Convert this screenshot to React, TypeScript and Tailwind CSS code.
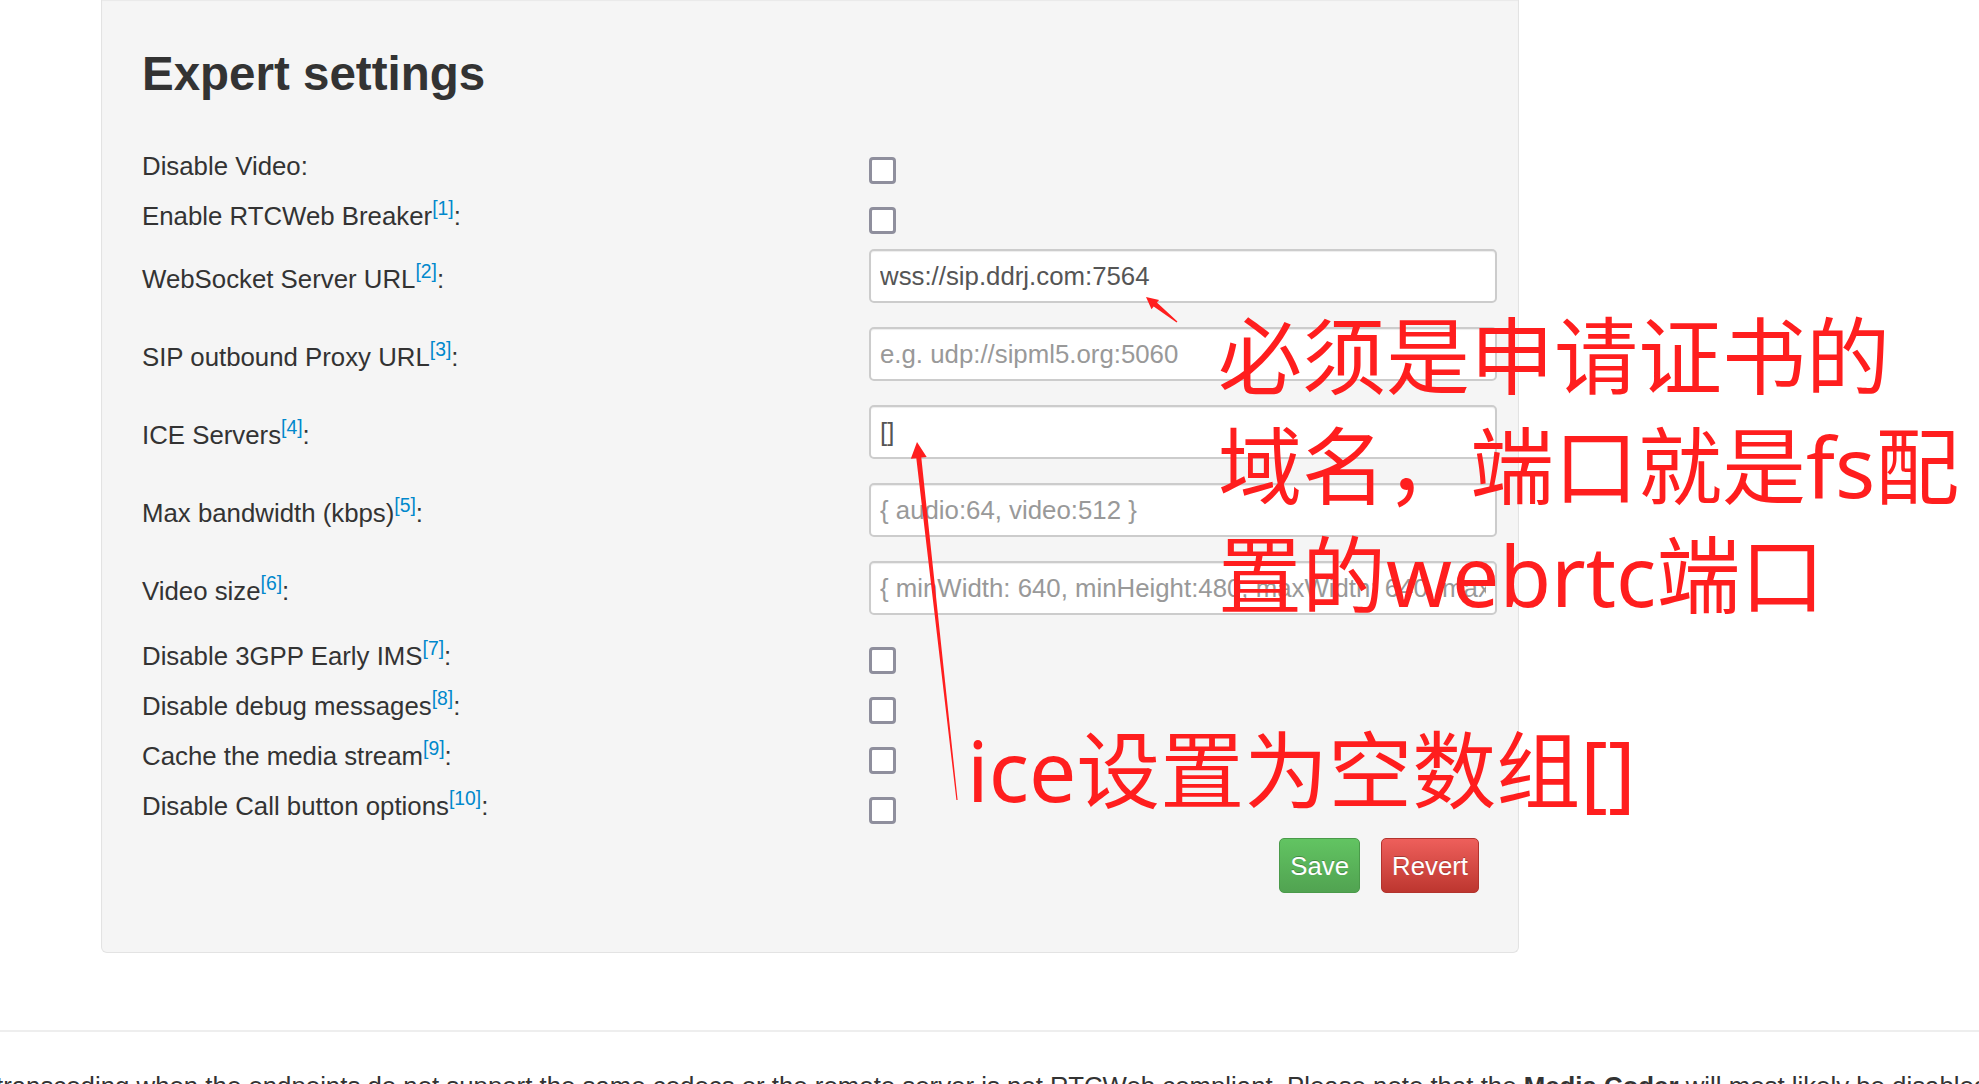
import React from 'react';

type Row =
  | { kind: 'check'; label: string; note?: string; h: string }
  | { kind: 'text'; label: string; note?: string; h: string; value?: string; placeholder?: string };

const rows: Row[] = [
  { kind: 'check', label: 'Disable Video', h: 'h-[50px]' },
  { kind: 'check', label: 'Enable RTCWeb Breaker', note: '1', h: 'h-[47px]' },
  { kind: 'text', label: 'WebSocket Server URL', note: '2', h: 'h-[78px]', value: 'wss://sip.ddrj.com:7564' },
  { kind: 'text', label: 'SIP outbound Proxy URL', note: '3', h: 'h-[78px]', placeholder: 'e.g. udp://sipml5.org:5060' },
  { kind: 'text', label: 'ICE Servers', note: '4', h: 'h-[78px]', value: '[]' },
  { kind: 'text', label: 'Max bandwidth (kbps)', note: '5', h: 'h-[78px]', placeholder: '{ audio:64, video:512 }' },
  {
    kind: 'text',
    label: 'Video size',
    note: '6',
    h: 'h-[81px]',
    placeholder: '{ minWidth: 640, minHeight:480, maxWidth: 640, maxHeight:480 }',
  },
  { kind: 'check', label: 'Disable 3GPP Early IMS', note: '7', h: 'h-[50px]' },
  { kind: 'check', label: 'Disable debug messages', note: '8', h: 'h-[50px]' },
  { kind: 'check', label: 'Cache the media stream', note: '9', h: 'h-[50px]' },
  { kind: 'check', label: 'Disable Call button options', note: '10', h: 'h-[46px]' },
];

function Label({ text, note }: { text: string; note?: string }) {
  return (
    <span>
      {text}
      {note && <sup className="text-[#0088cc]">[{note}]</sup>}:
    </span>
  );
}

function SettingRow({ row }: { row: Row }) {
  if (row.kind === 'check') {
    return (
      <div className={`flex items-start ${row.h}`}>
        <div className="w-[727px] shrink-0 leading-[28px]">
          <Label text={row.label} note={row.note} />
        </div>
        <input
          type="checkbox"
          className="mt-[5px] h-[27px] w-[27px] appearance-none rounded-[4px] border-[3px] border-[#8f8f9d] bg-white"
        />
      </div>
    );
  }
  return (
    <div className={`flex items-start ${row.h}`}>
      <div className="mt-[16px] w-[727px] shrink-0 leading-[28px]">
        <Label text={row.label} note={row.note} />
      </div>
      <input
        type="text"
        readOnly
        defaultValue={row.value}
        placeholder={row.placeholder}
        className="h-[54px] w-[628px] rounded-[5px] border-2 border-[#cccccc] bg-white px-[9px] text-[25.8px] text-[#555] shadow-[inset_0_1px_1px_rgba(0,0,0,0.075)] outline-none placeholder:text-[#999]"
      />
    </div>
  );
}

function Annotations() {
  return (
    <div className="pointer-events-none absolute inset-0">
      <svg className="absolute inset-0" width="1979" height="1084" viewBox="0 0 1979 1084">
        {/* short arrow to the wss url */}
        <polygon points="1146,297 1159.1,299.9 1156.9,302.6 1177.4,321.5 1176.6,322.5 1153.7,306.5 1151.5,309.2" fill="#ff1e1e" />
        {/* long arrow to the ice value */}
        <polygon points="917,442 926.7,457 921.3,457.6 957.6,799.9 956.4,800.1 916.3,458.2 910.8,458.8" fill="#ff1e1e" />
      </svg>
      <div className="absolute left-[1218px] top-[301px] whitespace-nowrap font-['Noto_Sans','Noto_Sans_CJK_SC',sans-serif] text-[84px] leading-[109.5px] text-[#ff1e1e]">
        <div>必须是申请证书的</div>
        <div>域名，端口就是fs配</div>
        <div>置的webrtc端口</div>
      </div>
      <div className="absolute left-[967px] top-[715px] whitespace-nowrap font-['Noto_Sans','Noto_Sans_CJK_SC',sans-serif] text-[84px] leading-[109.5px] text-[#ff1e1e]">
        ice设置为空数组[]
      </div>
    </div>
  );
}

export default function App() {
  return (
    <div className="relative h-[1084px] w-[1979px] overflow-hidden bg-white font-['Liberation_Sans',Arial,sans-serif] text-[25.8px] text-[#333]">
      <div className="ml-[101px] h-[953px] w-[1418px] rounded-b-[6px] border border-t-0 border-[#e3e3e3] bg-[#f5f5f5] pl-[40px] pr-[20px] pt-[48px] shadow-[inset_0_1px_1px_rgba(0,0,0,0.05)]">
        <h2 className="text-[47.5px] font-bold leading-[52px]">Expert settings</h2>
        <div className="mt-[52px]">
          {rows.map((r) => (
            <SettingRow key={r.label} row={r} />
          ))}
        </div>
        <div className="flex justify-end gap-[21px] pr-[19px]">
          <button className="h-[55px] rounded-[5px] border border-[#4a9a4a] bg-gradient-to-b from-[#62c462] to-[#51a351] px-[10px] leading-[28px] text-white [text-shadow:0_-1px_0_rgba(0,0,0,0.25)]">
            Save
          </button>
          <button className="h-[55px] rounded-[5px] border border-[#b3332d] bg-gradient-to-b from-[#ee5f5b] to-[#bd362f] px-[10px] leading-[28px] text-white [text-shadow:0_-1px_0_rgba(0,0,0,0.25)]">
            Revert
          </button>
        </div>
      </div>
      <div className="mt-[77px] h-[2px] bg-[#eeeeee]" />
      <p className="-ml-[4px] mt-[40px] whitespace-nowrap leading-[28px]">
        transcoding when the endpoints do not support the same codecs or the remote server is not RTCWeb compliant. Please note that the <b>Media Coder</b> will most likely be disabled in production.
      </p>
      <Annotations />
    </div>
  );
}
